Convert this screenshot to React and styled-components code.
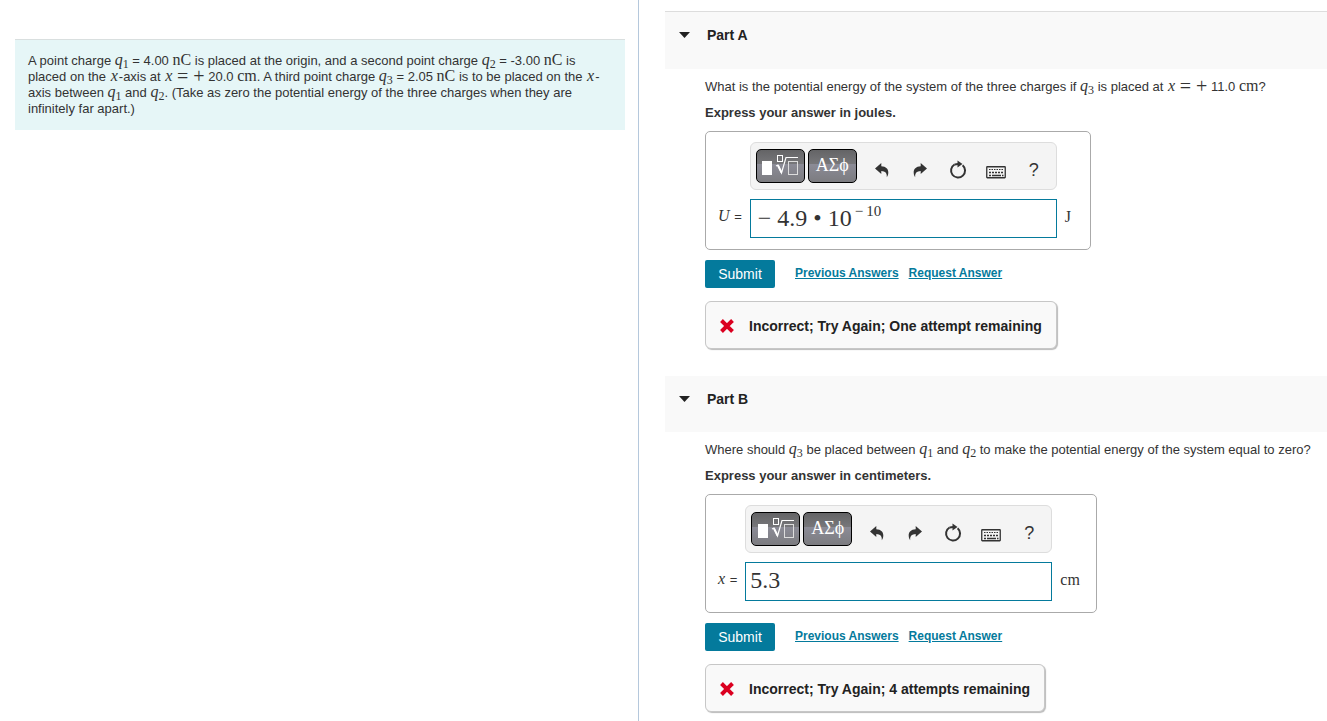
import React from "react";
import styled, { createGlobalStyle } from "styled-components";

const sans = `"Liberation Sans", Arial, sans-serif`;
const serif = `"Liberation Serif", "Times New Roman", serif`;

const GlobalStyle = createGlobalStyle`
  *, *::before, *::after { box-sizing: border-box; }
  body {
    margin: 0;
    background: #fff;
    color: #333;
    font-family: ${sans};
    font-size: 13px;
    line-height: 16px;
  }
  button, input { font-family: inherit; }
`;

const Page = styled.div`
  display: grid;
  grid-template-columns: 639fr 688fr;
  min-height: 100vh;
`;

const IntroPane = styled.aside`
  padding: 39px 13px 0 15px;
  border-right: 1px solid #b5c8dc;
`;

const IntroBox = styled.p`
  margin: 0;
  padding: 13px 20px 13px 13px;
  border-top: 1px solid #d9dfdf;
  background: #e6f6f7;
`;

const WorkPane = styled.main`
  padding: 11px 0 8px 26px;
`;

const Part = styled.section`
  & + & { margin-top: 27px; }
`;

const PartHeader = styled.header`
  display: flex;
  align-items: flex-start;
  gap: 18px;
  height: ${(p) => (p.$ruled ? 58 : 56)}px;
  padding: 15px 14px;
  border-top: ${(p) => (p.$ruled ? "1px solid #ddd" : "0")};
  background: #f9f9f9;
`;

const Toggle = styled.button`
  width: 10px;
  height: 16px;
  padding: 0;
  border: 0;
  background: none;
  svg { display: block; }
`;

const PartTitle = styled.h2`
  margin: 0;
  font-size: 14px;
  font-weight: bold;
  color: #222;
`;

const PartBody = styled.div`
  display: flex;
  flex-direction: column;
  align-items: flex-start;
  padding: 10px 0 0 40px;
`;

const Question = styled.p`
  margin: 0 0 10px;
  white-space: nowrap;
`;

const Instruction = styled.p`
  margin: 0 0 10px;
  font-weight: bold;
`;

const AnswerBox = styled.div`
  display: grid;
  grid-template-columns: auto 307px auto;
  column-gap: 8px;
  row-gap: 9px;
  align-items: center;
  padding: 10px 16px 11px 11px;
  border: 1px solid #aaa;
  border-radius: 5px;
`;

const Toolbar = styled.div`
  grid-column: 2;
  grid-row: 1;
  display: flex;
  align-items: center;
  height: 48px;
  padding: 0 5px;
  border: 1px solid #ddd;
  border-radius: 6px;
  background: #f4f4f4;
`;

const PaletteButton = styled.button`
  display: flex;
  align-items: center;
  justify-content: center;
  width: 49px;
  height: 34px;
  margin-right: 3px;
  padding: 0 0 2px;
  border: 1px solid #000;
  border-radius: 5px;
  background: linear-gradient(#646466, #77777a 44%, #8b8b96 45%, #7c7c80);
  color: #fff;
  font-family: ${serif};
  font-size: 18px;
  line-height: 20px;
`;

const IconRow = styled.div`
  display: flex;
  gap: 18px;
  padding: 8px 0 0 12px;
`;

const IconButton = styled.button`
  display: flex;
  align-items: center;
  justify-content: center;
  width: 20px;
  height: 20px;
  padding: 0;
  border: 0;
  background: none;
  color: #333;
  font-size: 18px;
`;

const Variable = styled.label`
  grid-column: 1;
  grid-row: 2;
  padding-bottom: 3px;
  font-size: 13px;
  white-space: nowrap;
`;

const fieldStyle = `
  grid-column: 2;
  grid-row: 2;
  width: 100%;
  height: 39px;
  border: 1px solid #047a9c;
  background: #fff;
  color: #333;
  font-size: 24px;
  line-height: 36px;
  outline: none;
`;

const AnswerInput = styled.input`
  ${fieldStyle}
  && { font-family: ${serif}; }
  padding: 0 4px 2px;
`;

const MathField = styled.div`
  ${fieldStyle}
  display: flex;
  gap: 6px;
  padding: 0 7px;
  font-family: ${serif};
`;

const Exponent = styled.sup`
  display: inline-flex;
  gap: 3px;
  margin-left: 3px;
  vertical-align: 10px;
  font-size: 15px;
  line-height: 15px;
`;

const Unit = styled.span`
  grid-column: 3;
  grid-row: 2;
  min-width: 9px;
  padding-bottom: 3px;
  font-family: ${serif};
  font-size: 16px;
`;

const Actions = styled.div`
  display: flex;
  align-items: center;
  gap: 10px;
  margin-top: 10px;
`;

const SubmitButton = styled.button`
  width: 70px;
  height: 28px;
  margin-right: 10px;
  padding: 0;
  border: 0;
  border-radius: 2px;
  background: #047a9c;
  color: #fff;
  font-size: 14px;
`;

const ActionLink = styled.a`
  padding-bottom: 2px;
  color: #047a9c;
  font-size: 12px;
  font-weight: bold;
`;

const Feedback = styled.div`
  display: flex;
  align-items: center;
  gap: 14px;
  height: 48px;
  margin-top: 13px;
  padding: 2px 14px 0;
  border: 1px solid #c7c7c7;
  border-radius: 6px;
  background: #f9f9f9;
  box-shadow: 1px 1px 1px #bbb;
  color: #222;
  font-size: 14px;
  font-weight: bold;
`;

const MathText = styled.span`
  font-family: ${serif};
  font-size: 16px;
  line-height: 12px;
  white-space: nowrap;
  sub {
    font-size: 12px;
    line-height: 8px;
    vertical-align: -3px;
  }
`;

const Operators = styled(MathText)`
  font-size: 20px;
  line-height: 8px;
  vertical-align: -2px;
`;

const Glyph = styled.i`
  margin: 0 1px;
  font-family: ${serif};
  font-size: 16px;
  line-height: 12px;
`;

const Q = ({ n }) => (
  <MathText>
    <i>q</i>
    <sub>{n}</sub>
  </MathText>
);

const X = () => <Glyph>x</Glyph>;

const Position = ({ value }) => (
  <>
    <X /> <Operators>= +</Operators> {value} <MathText>cm</MathText>
  </>
);

const Caret = () => (
  <svg width="11" height="16" viewBox="0 0 11 16" aria-hidden="true">
    <path d="M0 5h11L5.500 11z" fill="#222" />
  </svg>
);

const RootIcon = () => (
  <svg width="38" height="26" viewBox="0 0 38 26" fill="none" aria-hidden="true">
    <rect x="1" y="9" width="10" height="14" fill="#fff" />
    <rect x="16.500" y="3.500" width="5" height="6" stroke="#fff" />
    <path d="M15 14l2-1 3.500 8L25 5.500h12" stroke="#fff" strokeWidth="1.200" />
    <path d="M17 13.500l3.500 7" stroke="#fff" strokeWidth="2" />
    <rect x="27.500" y="9.500" width="9" height="13" stroke="#ddd" />
  </svg>
);

const UndoIcon = ({ flip }) => (
  <svg width="16" height="16" viewBox="0 0 16 16" aria-hidden="true">
    <path
      d="M1 6.400L7.300 1v3.200C12 4.300 14.500 7 14.300 10.800c0 1.800-.7 3.300-1.500 4.500.3-4.200-1.500-6.200-5.500-6.300v3z"
      fill="#333"
      transform={flip ? "matrix(-1 0 0 1 16 0)" : undefined}
    />
  </svg>
);

const ResetIcon = () => (
  <svg width="18" height="20" viewBox="0 0 18 20" fill="none" aria-hidden="true">
    <path d="M5.500 4.500A7 7 0 1 0 13.600 5.200" stroke="#333" strokeWidth="2" />
    <path d="M8.500 0.500L13.500 4 8.500 7.500z" fill="#333" />
    <path d="M5.500 4.600Q7 4 9.500 4" stroke="#333" strokeWidth="2" />
  </svg>
);

const KeyboardIcon = () => (
  <svg width="20" height="18" viewBox="0 0 20 18" fill="none" aria-hidden="true">
    <rect x="0.750" y="5.750" width="18.500" height="11" rx="0.500" stroke="#333" strokeWidth="1.300" />
    <path d="M3 8.500h14" stroke="#333" strokeDasharray="1.500 1" />
    <path d="M3 11.500h14" stroke="#333" strokeWidth="1.500" strokeDasharray="2 1" />
    <path d="M3 14.500h2M6 14.500h9M16 14.500h1.500" stroke="#333" strokeWidth="1.300" />
  </svg>
);

const CrossIcon = () => (
  <svg width="15" height="14" viewBox="0 0 15 14" aria-hidden="true">
    <path
      d="M2.900 2.900L11.100 11.100M11.100 2.900L2.900 11.100"
      stroke="#db0020"
      strokeWidth="4"
      strokeLinecap="square"
    />
  </svg>
);

const MathToolbar = () => (
  <Toolbar role="toolbar" aria-label="Math tools">
    <PaletteButton type="button" aria-label="Templates"><RootIcon /></PaletteButton>
    <PaletteButton type="button">ΑΣϕ</PaletteButton>
    <IconRow>
      <IconButton type="button" aria-label="Undo"><UndoIcon /></IconButton>
      <IconButton type="button" aria-label="Redo"><UndoIcon flip /></IconButton>
      <IconButton type="button" aria-label="Reset"><ResetIcon /></IconButton>
      <IconButton type="button" aria-label="Keyboard shortcuts"><KeyboardIcon /></IconButton>
      <IconButton type="button">?</IconButton>
    </IconRow>
  </Toolbar>
);

const ProblemPart = ({ title, ruled, question, instruction, answer, feedback }) => (
  <Part>
    <PartHeader $ruled={ruled}>
      <Toggle type="button" aria-label={`Collapse ${title}`}><Caret /></Toggle>
      <PartTitle>{title}</PartTitle>
    </PartHeader>
    <PartBody>
      <Question>{question}</Question>
      <Instruction>{instruction}</Instruction>
      <AnswerBox>
        <MathToolbar />
        {answer}
      </AnswerBox>
      <Actions>
        <SubmitButton type="button">Submit</SubmitButton>
        <ActionLink href="#previous">Previous Answers</ActionLink>
        <ActionLink href="#request">Request Answer</ActionLink>
      </Actions>
      <Feedback role="status">
        <CrossIcon />
        {feedback}
      </Feedback>
    </PartBody>
  </Part>
);

export default function App() {
  return (
    <>
      <GlobalStyle />
      <Page>
        <IntroPane>
          <IntroBox>
            A point charge <Q n={1} /> = 4.00 <MathText>nC</MathText> is placed at the
            origin, and a second point charge <Q n={2} /> = -3.00 <MathText>nC</MathText> is
            placed on the <X />-axis at <Position value="20.0" />. A third point
            charge <Q n={3} /> = 2.05 <MathText>nC</MathText> is to be placed on
            the <X />-axis between <Q n={1} /> and <Q n={2} />. (Take as zero the potential
            energy of the three charges when they are infinitely far apart.)
          </IntroBox>
        </IntroPane>
        <WorkPane>
          <ProblemPart
            title="Part A"
            ruled
            question={
              <>
                What is the potential energy of the system of the three charges
                if <Q n={3} /> is placed at <Position value="11.0" />?
              </>
            }
            instruction="Express your answer in joules."
            answer={
              <>
                <Variable as="span" id="label-a"><Glyph>U</Glyph> =</Variable>
                <MathField
                  role="textbox"
                  aria-labelledby="label-a"
                  contentEditable
                  suppressContentEditableWarning
                  spellCheck={false}
                >
                  <span>−</span>
                  <span>4.9</span>
                  <span>•</span>
                  <span>
                    10<Exponent><span>−</span><span>10</span></Exponent>
                  </span>
                </MathField>
                <Unit>J</Unit>
              </>
            }
            feedback="Incorrect; Try Again; One attempt remaining"
          />
          <ProblemPart
            title="Part B"
            question={
              <>
                Where should <Q n={3} /> be placed between <Q n={1} /> and <Q n={2} /> to
                make the potential energy of the system equal to zero?
              </>
            }
            instruction="Express your answer in centimeters."
            answer={
              <>
                <Variable htmlFor="answer-b"><Glyph>x</Glyph> =</Variable>
                <AnswerInput id="answer-b" type="text" defaultValue="5.3" />
                <Unit>cm</Unit>
              </>
            }
            feedback="Incorrect; Try Again; 4 attempts remaining"
          />
        </WorkPane>
      </Page>
    </>
  );
}
